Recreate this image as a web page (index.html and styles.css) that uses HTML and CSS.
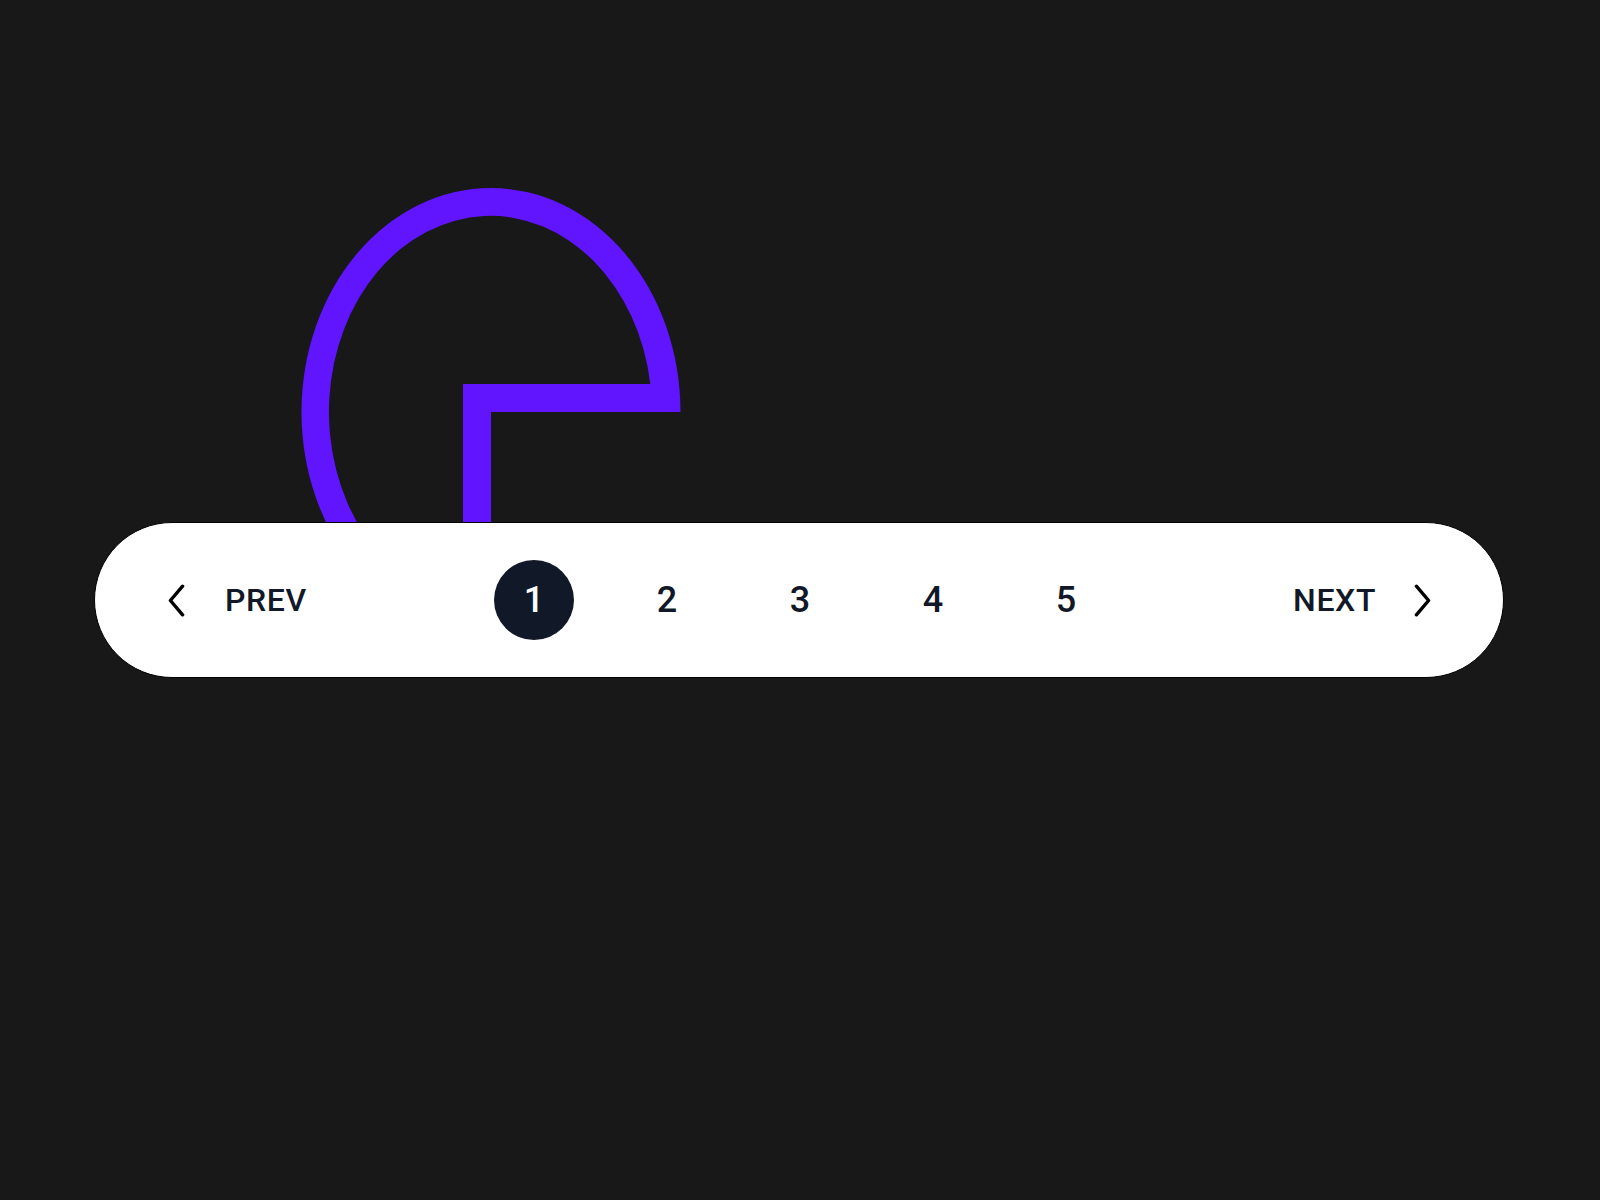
FILE: index.html
```html
<!DOCTYPE html>
<html lang="en">
<head>
<meta charset="utf-8">
<title>Pagination</title>
<link rel="stylesheet" href="styles.css">
</head>
<body>
<div class="stage">
  <svg class="deco" width="1600" height="1200" viewBox="0 0 1600 1200" aria-hidden="true">
    <path fill="#6115ff" fill-rule="evenodd" d="M680.5 412 A189.5 224 0 1 0 491 636 L491 412 Z M650.3 384 A161.5 196 0 1 0 463 605 L463 384 Z"/>
  </svg>
  <nav class="pager">
    <button class="nav-btn prev">
      <svg class="chev" width="18" height="33" viewBox="0 0 18 33"><path d="M15.6 2.2 L3.4 16.5 L15.6 30.8" fill="none" stroke="#000" stroke-width="3.4" stroke-linecap="round" stroke-linejoin="round"/></svg>
      <span class="label">PREV</span>
    </button>
    <div class="pages">
      <button class="page active">1</button>
      <button class="page">2</button>
      <button class="page">3</button>
      <button class="page">4</button>
      <button class="page">5</button>
    </div>
    <button class="nav-btn next">
      <span class="label">NEXT</span>
      <svg class="chev" width="18" height="33" viewBox="0 0 18 33"><path d="M2.4 2.2 L14.6 16.5 L2.4 30.8" fill="none" stroke="#000" stroke-width="3.4" stroke-linecap="round" stroke-linejoin="round"/></svg>
    </button>
  </nav>
</div>
</body>
</html>
```
FILE: styles.css
```css
html, body {
  margin: 0;
  padding: 0;
  background: #181818;
}
body {
  width: 1600px;
  height: 1200px;
  overflow: hidden;
  font-family: Roboto, "Liberation Sans", sans-serif;
}
.stage {
  position: relative;
  width: 1600px;
  height: 1200px;
  padding-top: 522px;
  box-sizing: border-box;
}
.deco {
  position: absolute;
  left: 0;
  top: 0;
}
.pager {
  position: relative;
  z-index: 1;
  box-sizing: border-box;
  margin-left: 94px;
  width: 1410px;
  height: 156px;
  border: 1px solid #000;
  border-radius: 78px;
  background: #fff;
  display: flex;
  align-items: center;
  justify-content: space-between;
  padding: 0 71px 0 72px;
}
button {
  font-family: inherit;
  border: 0;
  background: none;
  padding: 0;
  margin: 0;
  cursor: pointer;
}
.nav-btn {
  display: flex;
  align-items: center;
  gap: 38px;
  color: #111827;
  font-size: 32px;
  font-weight: 500;
  letter-spacing: 0.6px;
  line-height: 1;
}
.nav-btn.prev {
  gap: 40px;
}
.chev {
  display: block;
}
.pages {
  display: flex;
  align-items: center;
  gap: 53px;
}
.page {
  width: 80px;
  height: 80px;
  border-radius: 50%;
  display: flex;
  align-items: center;
  justify-content: center;
  font-size: 36px;
  font-weight: 500;
  line-height: 1;
  color: #111827;
}
.page.active {
  background: #111827;
  color: #fff;
}
```
